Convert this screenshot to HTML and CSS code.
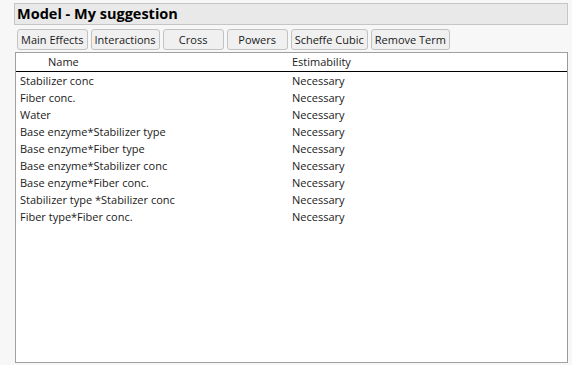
FILE: index.html
```html
<!DOCTYPE html>
<html>
<head>
<meta charset="utf-8">
<link rel="stylesheet" href="styles.css">
</head>
<body>
<div class="panel">
  <div class="title">Model - My suggestion</div>
  <div class="toolbar">
    <button class="btn">Main Effects</button>
    <button class="btn">Interactions</button>
    <button class="btn wide">Cross</button>
    <button class="btn wide">Powers</button>
    <button class="btn">Scheffe Cubic</button>
    <button class="btn">Remove Term</button>
  </div>
  <div class="table">
    <div class="thead">
      <div class="c-name hname">Name</div>
      <div class="c-est">Estimability</div>
    </div>
    <div class="row"><div class="c-name">Stabilizer conc</div><div class="c-est">Necessary</div></div>
    <div class="row"><div class="c-name">Fiber conc.</div><div class="c-est">Necessary</div></div>
    <div class="row"><div class="c-name">Water</div><div class="c-est">Necessary</div></div>
    <div class="row"><div class="c-name">Base enzyme*Stabilizer type</div><div class="c-est">Necessary</div></div>
    <div class="row"><div class="c-name">Base enzyme*Fiber type</div><div class="c-est">Necessary</div></div>
    <div class="row"><div class="c-name">Base enzyme*Stabilizer conc</div><div class="c-est">Necessary</div></div>
    <div class="row"><div class="c-name">Base enzyme*Fiber conc.</div><div class="c-est">Necessary</div></div>
    <div class="row"><div class="c-name">Stabilizer type *Stabilizer conc</div><div class="c-est">Necessary</div></div>
    <div class="row"><div class="c-name">Fiber type*Fiber conc.</div><div class="c-est">Necessary</div></div>
  </div>
</div>
</body>
</html>
```
FILE: styles.css
```css
html, body {
  margin: 0;
  padding: 0;
  background: #f7f7f7;
  font-family: "Open Sans", "Noto Sans", sans-serif;
  font-size: 11px;
  color: #1a1a1a;
}
.panel {
  padding: 3px 4px 0 14px;
  display: flex;
  flex-direction: column;
}
.title {
  height: 20px;
  border: 1px solid #c6c6c6;
  background: #e9e9e9;
  font-weight: bold;
  font-size: 14.5px;
  line-height: 20px;
  padding-left: 2px;
  color: #000;
}
.toolbar {
  display: flex;
  gap: 3px;
  margin-top: 4px;
  padding-left: 3px;
  height: 21px;
}
.btn {
  height: 21px;
  box-sizing: border-box;
  border: 1px solid #c2c2c2;
  border-radius: 3px;
  background: #f0f0f0;
  font-family: inherit;
  font-size: 11px;
  color: #1a1a1a;
  padding: 0 3px;
  margin: 0;
}
.btn.wide { min-width: 61px; }
.table {
  margin-top: 2px;
  margin-left: 1px;
  height: 311px;
  box-sizing: border-box;
  border: 1px solid #a0a0a0;
  border-right-color: #9a9a9a;
  background: #fff;
}
.thead {
  display: flex;
  height: 18px;
  line-height: 18px;
  border-bottom: 1px solid #000;
}
.row {
  display: flex;
  height: 17px;
  line-height: 17px;
}
.c-name {
  width: 271px;
  padding-left: 4px;
  box-sizing: border-box;
}
.hname { padding-left: 32px; }
.c-est { padding-left: 5px; }
```
